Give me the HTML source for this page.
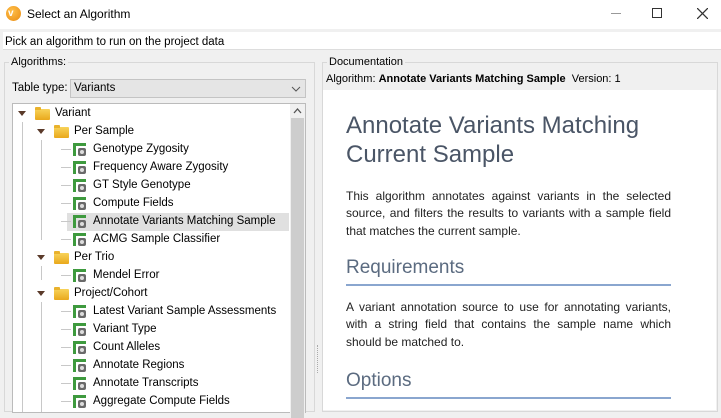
<!DOCTYPE html>
<html><head><meta charset="utf-8"><style>
*{margin:0;padding:0;box-sizing:border-box}
body{width:721px;height:405px;overflow:hidden;background:#f0f0f0;font-family:"Liberation Sans",sans-serif;font-size:11.5px;color:#000;position:relative}
.a{position:absolute;white-space:nowrap}
.row{position:absolute;height:18px;line-height:18px;white-space:nowrap}
.fold{position:absolute;width:15px;height:11px;background:linear-gradient(#f8d35a,#e9a81c);border-radius:1px}
.fold:before{content:"";position:absolute;left:0;top:-2px;width:6px;height:3px;background:#e9b22c;border-radius:1px 1px 0 0}
.tri{position:absolute;width:0;height:0;border-left:4px solid transparent;border-right:4px solid transparent;border-top:5px solid #5a3a2a}
.ic{position:absolute;width:13px;height:13px}
.ic:before{content:"";position:absolute;left:0;top:0;width:3px;height:13px;background:#3e9a3e}
.ic:after{content:"";position:absolute;left:0;top:0;width:13px;height:3px;background:#3e9a3e}
.g{position:absolute;left:5px;top:5px;width:8px;height:8px;background:#6a6a6a;border-radius:2px}
.g:after{content:"";position:absolute;left:2px;top:2px;width:4px;height:4px;background:#ddd;border-radius:50%}
.vl{position:absolute;width:1px;background:#c8c8c8}
.hl{position:absolute;height:1px;background:#c8c8c8}
.p{position:absolute;left:346px;width:325px;font-size:12px;line-height:17.3px;text-align:justify;color:#222}
.h{position:absolute;left:346px;color:#5b6b80;font-size:19px}
.line{position:absolute;left:346px;width:325px;height:2px;background:#8aa6cf}
</style></head><body>
<div class="a" style="left:0;top:0;width:721px;height:29px;background:#fff"></div>
<div class="a" style="left:6px;top:6px;width:15px;height:15px;border-radius:50%;background:radial-gradient(circle at 40% 35%,#ffc04a,#e98a10)"></div>
<div class="a" style="left:8px;top:8px;color:#fff;font-size:10px;font-weight:bold">v</div>
<div class="a" style="left:27px;top:7px;font-size:12px">Select an Algorithm</div>
<div class="a" style="left:611px;top:13px;width:10px;height:1px;background:#999"></div>
<div class="a" style="left:652px;top:8px;width:10px;height:10px;border:1.5px solid #333"></div>
<svg class="a" style="left:697px;top:8px" width="11" height="11"><path d="M0 0L11 11M11 0L0 11" stroke="#333" stroke-width="1.3"/></svg>
<div class="a" style="left:3px;top:32px;width:718px;height:18px;background:#fff;border-bottom:1px solid #ddd"></div>
<div class="a" style="left:5px;top:36px;font-size:11.5px">Pick an algorithm to run on the project data</div>

<div class="a" style="left:4px;top:62px;width:311px;height:350px;border:1px solid #d8d8d8"></div>
<div class="a" style="left:9px;top:56px;background:#f0f0f0;padding:0 2px;font-size:11px">Algorithms:</div>
<div class="a" style="left:12px;top:82px">Table type:</div>
<div class="a" style="left:70px;top:79px;width:236px;height:19px;background:#e5e5e5;border:1px solid #c4c4c4;padding:2px 3px">Variants</div>
<svg class="a" style="left:291px;top:86px" width="10" height="6"><path d="M1 1L5 5L9 1" stroke="#555" fill="none"/></svg>
<div class="a" style="left:12px;top:103px;width:294px;height:310px;background:#fff;border:1px solid #bbb"></div>
<div class="a" style="left:290px;top:104px;width:15px;height:310px;background:#f0f0f0"></div>
<div class="a" style="left:291px;top:118px;width:13px;height:300px;background:#cdcdcd"></div>
<svg class="a" style="left:293px;top:108px" width="9" height="6"><path d="M1 5L4.5 1L8 5" stroke="#555" fill="none" stroke-width="1.3"/></svg>
<div class="a" style="left:67px;top:213px;width:222px;height:18px;background:#e0e0e0"></div>

<div class="vl" style="left:22px;top:122px;height:290px"></div>
<div class="vl" style="left:41px;top:140px;height:100px"></div>
<div class="vl" style="left:41px;top:266px;height:14px"></div>
<div class="vl" style="left:41px;top:302px;height:110px"></div>

<div class="tri" style="left:18px;top:111px"></div><div class="fold" style="left:35px;top:109px"></div><div class="row" style="left:55px;top:104px">Variant</div>
<div class="tri" style="left:37px;top:129px"></div><div class="fold" style="left:54px;top:127px"></div><div class="row" style="left:74px;top:122px">Per Sample</div>
<div class="tri" style="left:37px;top:255px"></div><div class="fold" style="left:54px;top:253px"></div><div class="row" style="left:74px;top:248px">Per Trio</div>
<div class="tri" style="left:37px;top:291px"></div><div class="fold" style="left:54px;top:289px"></div><div class="row" style="left:74px;top:284px">Project/Cohort</div>

<div id="items"></div>
<script>
var it=[[140,"Genotype Zygosity"],[158,"Frequency Aware Zygosity"],[176,"GT Style Genotype"],[194,"Compute Fields"],[212,"Annotate Variants Matching Sample"],[230,"ACMG Sample Classifier"],[266,"Mendel Error"],[302,"Latest Variant Sample Assessments"],[320,"Variant Type"],[338,"Count Alleles"],[356,"Annotate Regions"],[374,"Annotate Transcripts"],[392,"Aggregate Compute Fields"]];
var h="";it.forEach(function(e){var y=e[0];h+='<div class="hl" style="left:61px;top:'+(y+9)+'px;width:10px"></div><div class="ic" style="left:73px;top:'+(y+3)+'px"><div class="g"></div></div><div class="row" style="left:93px;top:'+y+'px">'+e[1]+'</div>';});
document.getElementById("items").innerHTML=h;
</script>
<div class="a" style="left:317px;top:345px;width:2px;height:28px;border-left:1px dotted #aaa"></div>

<div class="a" style="left:322px;top:62px;width:396px;height:350px;border:1px solid #d8d8d8"></div>
<div class="a" style="left:327px;top:56px;background:#f0f0f0;padding:0 2px;font-size:11px">Documentation</div>
<div class="a" style="left:326px;top:73px;font-size:11px">Algorithm: <b>Annotate Variants Matching Sample</b>&nbsp; Version: 1</div>
<div class="a" style="left:323px;top:90px;width:393px;height:320px;background:#fff"></div>
<div class="a" style="left:346px;top:111px;font-size:24px;line-height:29px;color:#4a5566">Annotate Variants Matching<br>Current Sample</div>
<div class="p" style="top:188px">This algorithm annotates against variants in the selected source, and filters the results to variants with a sample field that matches the current sample.</div>
<div class="h" style="top:257px">Requirements</div>
<div class="line" style="top:284px"></div>
<div class="p" style="top:299px">A variant annotation source to use for annotating variants, with a string field that contains the sample name which should be matched to.</div>
<div class="h" style="top:370px">Options</div>
<div class="line" style="top:397px"></div>
</body></html>
